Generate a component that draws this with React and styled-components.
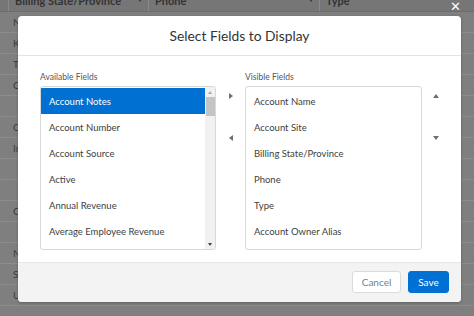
import React from "react";
import styled, { createGlobalStyle } from "styled-components";

const Global = createGlobalStyle`
  html, body { margin: 0; padding: 0; }
  body {
    width: 474px; height: 316px; overflow: hidden;
    font-family: Lato, "Open Sans", sans-serif;
    background: #7f7f7f;
  }
`;

const Page = styled.div`
  position: relative;
  width: 474px;
  height: 316px;
  overflow: hidden;
  background: #7f7f7f;
`;

const Table = styled.div`
  display: flex;
  flex-direction: column;
  margin-top: -11px;
`;

const HeadRow = styled.div`
  display: grid;
  grid-template-columns: 8px 140px 171px 1fr;
  height: 22px;
  background: #767676;
  border-bottom: 1px solid #6c6c6c;
`;

const HeadCell = styled.div`
  display: flex;
  align-items: center;
  justify-content: space-between;
  padding: 0 6px;
  border-left: ${(p) => (p.$first ? "none" : "1px solid #8a8a8a")};
  font-size: 11px;
  font-weight: 700;
  color: #333;
  white-space: nowrap;
  overflow: hidden;
`;

const Caret = styled.span`
  width: 0; height: 0;
  border-left: 2.5px solid transparent;
  border-right: 2.5px solid transparent;
  border-top: 3px solid #3a3a3a;
`;

const Row = styled.div`
  display: flex;
  align-items: center;
  height: 20px;
  padding-left: 13px;
  border-bottom: 1px solid #8c8c8c;
  font-size: 10px;
  color: #3a3a3a;
  white-space: nowrap;
`;

const Close = styled.div`
  position: absolute;
  top: 1px;
  left: 450px;
  color: #fff;
  font-size: 13px;
  font-family: "DejaVu Sans", sans-serif;
  line-height: 12px;
`;

const Modal = styled.div`
  position: absolute;
  left: 18px;
  top: 16px;
  width: 443px;
  height: 286px;
  background: #fff;
  border-radius: 4px;
  overflow: hidden;
  display: flex;
  flex-direction: column;
  box-shadow: 0 1px 3px rgba(0,0,0,0.25);
`;

const Header = styled.div`
  height: 40px;
  flex: none;
  display: flex;
  align-items: center;
  justify-content: center;
  border-bottom: 1px solid #e3e3e3;
  font-size: 13.8px;
  color: #333;
  padding-bottom: 1px;
  box-sizing: border-box;
`;

const Body = styled.div`
  flex: 1;
  display: flex;
  padding: 15px 0 0 22px;
`;

const Group = styled.div`
  display: flex;
  flex-direction: column;
`;

const Label = styled.div`
  font-size: 8.5px;
  color: #555;
  height: 15px;
  line-height: 13px;
`;

const ListBox = styled.div`
  width: ${(p) => p.$w}px;
  height: 164px;
  border: 1px solid #d8d8d8;
  border-radius: 3px;
  box-sizing: border-box;
  display: flex;
  overflow: hidden;
`;

const Items = styled.div`
  flex: 1;
  display: flex;
  flex-direction: column;
  padding-top: 1px;
`;

const Item = styled.div`
  height: 26px;
  flex: none;
  display: flex;
  align-items: center;
  padding-left: 8px;
  padding-top: 1px;
  box-sizing: border-box;
  font-size: 9.5px;
  color: ${(p) => (p.$sel ? "#fff" : "#3e3e3c")};
  background: ${(p) => (p.$sel ? "#0070d2" : "transparent")};
  white-space: nowrap;
`;

const ScrollBar = styled.div`
  width: 10px;
  flex: none;
  background: #f1f1f1;
  display: flex;
  flex-direction: column;
  align-items: center;
`;

const ScrollBtn = styled.div`
  height: 10px;
  display: flex;
  align-items: center;
  justify-content: center;
`;

const Thumb = styled.div`
  width: 9px;
  height: 19px;
  background: #c4c4c4;
`;

const Spacer = styled.div`
  flex: 1;
`;

const Tri = styled.span`
  width: 0; height: 0;
  ${(p) =>
    p.$dir === "up"
      ? `border-left: ${p.$s}px solid transparent; border-right: ${p.$s}px solid transparent; border-bottom: ${p.$s + 1}px solid ${p.$c};`
      : p.$dir === "down"
      ? `border-left: ${p.$s}px solid transparent; border-right: ${p.$s}px solid transparent; border-top: ${p.$s + 1}px solid ${p.$c};`
      : p.$dir === "right"
      ? `border-top: ${p.$s}px solid transparent; border-bottom: ${p.$s}px solid transparent; border-left: ${p.$s + 1}px solid ${p.$c};`
      : `border-top: ${p.$s}px solid transparent; border-bottom: ${p.$s}px solid transparent; border-right: ${p.$s + 1}px solid ${p.$c};`}
`;

const ArrowCol = styled.div`
  width: ${(p) => p.$w}px;
  display: flex;
  flex-direction: column;
  align-items: center;
  padding-top: 22px;
  gap: 36px;
`;

const ArrowBtn = styled.div`
  height: 6px;
  display: flex;
  align-items: center;
  justify-content: center;
`;

const Footer = styled.div`
  height: 40px;
  flex: none;
  background: #f3f3f3;
  border-top: 1px solid #e6e6e6;
  display: flex;
  align-items: center;
  justify-content: flex-end;
  gap: 7px;
  padding: 0 12px 1px 0;
  box-sizing: border-box;
`;

const Button = styled.button`
  height: 22px;
  padding: 0;
  width: ${(p) => p.$w}px;
  border-radius: 3px;
  font-family: inherit;
  font-size: 10px;
  border: 1px solid ${(p) => (p.$brand ? "#0070d2" : "#dddbda")};
  background: ${(p) => (p.$brand ? "#0070d2" : "#fff")};
  color: ${(p) => (p.$brand ? "#fff" : "#6f8194")};
`;

const rows = ["NHTSA", "Kroger", "Target", "Cisco", "", "Costco", "Intel", "", "", "Chevron", "", "Nike", "Sony", "Unilever"];
const available = ["Account Notes", "Account Number", "Account Source", "Active", "Annual Revenue", "Average Employee Revenue", "Billing City"];
const visible = ["Account Name", "Account Site", "Billing State/Province", "Phone", "Type", "Account Owner Alias"];

export default function App() {
  return (
    <Page>
      <Global />
      <Table>
        <HeadRow>
          <HeadCell $first />
          <HeadCell>Billing State/Province <Caret /></HeadCell>
          <HeadCell>Phone <Caret /></HeadCell>
          <HeadCell>Type</HeadCell>
        </HeadRow>
        {rows.map((r, i) => (
          <Row key={i}>{r}</Row>
        ))}
      </Table>
      <Close>✕</Close>
      <Modal>
        <Header>Select Fields to Display</Header>
        <Body>
          <Group>
            <Label>Available Fields</Label>
            <ListBox $w={176}>
              <Items>
                {available.map((a, i) => (
                  <Item key={a} $sel={i === 0}>{a}</Item>
                ))}
              </Items>
              <ScrollBar>
                <ScrollBtn><Tri $dir="up" $s={2} $c="#a8a8a8" /></ScrollBtn>
                <Thumb />
                <Spacer />
                <ScrollBtn><Tri $dir="down" $s={2} $c="#444" /></ScrollBtn>
              </ScrollBar>
            </ListBox>
          </Group>
          <ArrowCol $w={29}>
            <ArrowBtn><Tri $dir="right" $s={3} $c="#706e6b" /></ArrowBtn>
            <ArrowBtn><Tri $dir="left" $s={3} $c="#706e6b" /></ArrowBtn>
          </ArrowCol>
          <Group>
            <Label>Visible Fields</Label>
            <ListBox $w={177}>
              <Items>
                {visible.map((a) => (
                  <Item key={a}>{a}</Item>
                ))}
              </Items>
            </ListBox>
          </Group>
          <ArrowCol $w={28}>
            <ArrowBtn><Tri $dir="up" $s={3} $c="#706e6b" /></ArrowBtn>
            <ArrowBtn><Tri $dir="down" $s={3} $c="#706e6b" /></ArrowBtn>
          </ArrowCol>
        </Body>
        <Footer>
          <Button $w={49}>Cancel</Button>
          <Button $w={41} $brand>Save</Button>
        </Footer>
      </Modal>
    </Page>
  );
}
